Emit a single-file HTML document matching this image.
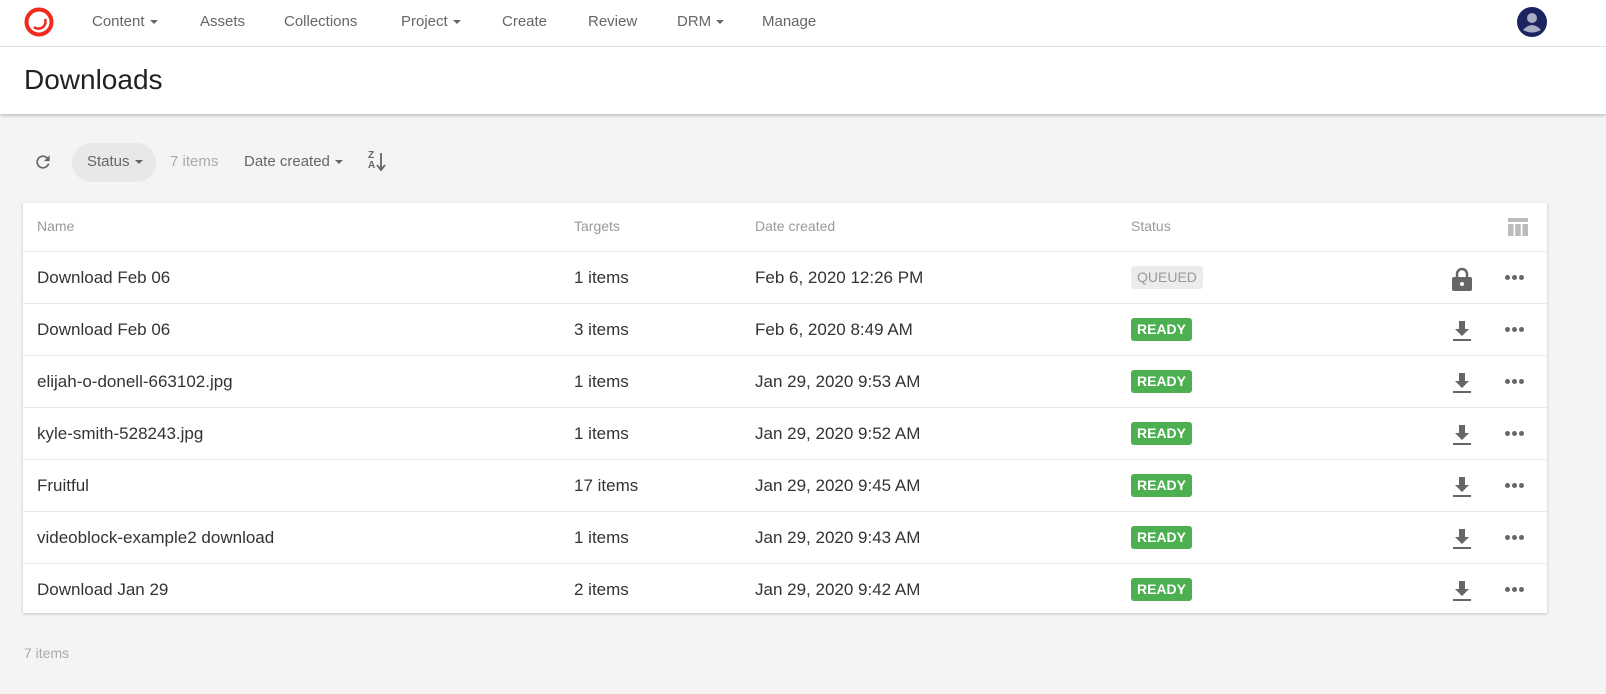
<!DOCTYPE html><html><head><style>
body{margin:0;width:1606px;height:694px;background:#f4f4f4;font-family:"Liberation Sans",sans-serif;overflow:hidden;position:relative}
.nav{position:absolute;top:0;left:0;width:1606px;height:46px;background:#fff;border-bottom:1px solid #e0e0e0}
.nav span{position:absolute;top:13px;font-size:15px;color:#666}
.car{display:inline-block;border-left:4px solid transparent;border-right:4px solid transparent;border-top:4px solid #666;vertical-align:middle;margin-left:5px}
.hdr{position:absolute;top:47px;left:0;width:1606px;height:67px;background:#fff;box-shadow:0 2px 3px rgba(0,0,0,.2)}
.hdr h1{margin:0;position:absolute;left:24px;top:17px;font-size:28px;font-weight:normal;color:#222}
.tb{position:absolute;top:153px;font-size:15px;color:#666}
.card{position:absolute;left:23px;top:203px;width:1524px;height:410px;background:#fff;box-shadow:0 1px 3px rgba(0,0,0,.2)}
.row{position:absolute;left:0;width:1524px;height:52px;border-top:1px solid #e8e8e8}
.row span{position:absolute;top:16px;font-size:17px;color:#333}
.th span{position:absolute;top:15px;font-size:14px;color:#999}
.badge{position:absolute;left:1108px;top:14px;height:23px;line-height:23px;padding:0 6px;border-radius:3px;font-size:14px;font-weight:bold;color:#fff;background:#4caf50}
.q{background:#ececec;color:#999;font-weight:normal}
.dots{position:absolute;left:1482px;top:23px;display:flex;gap:2px}
.dots i{display:block;width:5px;height:5px;border-radius:3px;background:#666}
.ic{position:absolute;left:1429px;top:15px}
</style></head><body>
<div class="nav">
<svg style="position:absolute;left:24px;top:7px" width="30" height="30" viewBox="0 0 30 30"><circle cx="15" cy="15" r="12.5" fill="none" stroke="#f02a1e" stroke-width="4"/><path d="M10 20 A7 7 0 0 0 21 12" fill="none" stroke="#f02a1e" stroke-width="2.5"/></svg>
<span style="left:92px">Content<i class="car"></i></span>
<span style="left:200px">Assets</span>
<span style="left:284px">Collections</span>
<span style="left:401px">Project<i class="car"></i></span>
<span style="left:502px">Create</span>
<span style="left:588px">Review</span>
<span style="left:677px">DRM<i class="car"></i></span>
<span style="left:762px">Manage</span>
<svg style="position:absolute;left:1516px;top:6px" width="32" height="32" viewBox="0 0 32 32"><circle cx="16" cy="16" r="15" fill="#1b2461"/><circle cx="16" cy="12" r="5" fill="#a9adc4"/><path d="M7 24 Q16 14 25 24 Q16 29 7 24Z" fill="#a9adc4"/></svg>
</div>
<div class="hdr"><h1>Downloads</h1></div>
<svg style="position:absolute;left:33px;top:152px" width="20" height="20" viewBox="0 0 24 24"><path d="M17.65 6.35A7.96 7.96 0 0 0 12 4a8 8 0 1 0 7.73 10h-2.08A6 6 0 1 1 12 6c1.66 0 3.14.69 4.22 1.78L13 11h7V4z" fill="#666"/></svg>
<div style="position:absolute;left:72px;top:143px;width:84px;height:39px;border-radius:20px;background:#e8e8e8"></div>
<span class="tb" style="left:87px">Status<i class="car"></i></span>
<span class="tb" style="left:170px;color:#aaa">7 items</span>
<span class="tb" style="left:244px">Date created<i class="car"></i></span>
<span class="tb" style="left:368px;top:151px;font-size:10px;font-weight:bold;line-height:10px">Z<br>A</span>
<svg style="position:absolute;left:376px;top:152px" width="10" height="20" viewBox="0 0 10 20"><path d="M5 1V17M1 13L5 18L9 13" fill="none" stroke="#666" stroke-width="1.8"/></svg>
<div class="card">
<div class="th"><span style="left:14px">Name</span><span style="left:551px">Targets</span><span style="left:732px">Date created</span><span style="left:1108px">Status</span>
<svg style="position:absolute;left:1485px;top:15px" width="20" height="18" viewBox="0 0 20 18"><rect x="0" y="0" width="20" height="4" fill="#bbb"/><rect x="0" y="6" width="5.5" height="12" fill="#bbb"/><rect x="7.2" y="6" width="5.5" height="12" fill="#bbb"/><rect x="14.5" y="6" width="5.5" height="12" fill="#bbb"/></svg></div>
<div class="row" style="top:48px"><span style="left:14px">Download Feb 06</span><span style="left:551px">1 items</span><span style="left:732px">Feb 6, 2020 12:26 PM</span><div class="badge q">QUEUED</div><svg class="ic" width="20" height="24" viewBox="0 0 20 24"><path d="M5 11V7a5 5 0 0 1 10 0v4" fill="none" stroke="#666" stroke-width="2.5"/><rect x="0" y="10" width="20" height="14" rx="2" fill="#666"/><circle cx="10" cy="17" r="2" fill="#fff"/></svg><div class="dots"><i></i><i></i><i></i></div></div>
<div class="row" style="top:100px"><span style="left:14px">Download Feb 06</span><span style="left:551px">3 items</span><span style="left:732px">Feb 6, 2020 8:49 AM</span><div class="badge">READY</div><svg class="ic" width="20" height="24" viewBox="0 0 20 24"><path d="M7 2h6v8h4l-7 7-7-7h4z" fill="#666"/><rect x="1" y="20" width="18" height="2" fill="#666"/></svg><div class="dots"><i></i><i></i><i></i></div></div>
<div class="row" style="top:152px"><span style="left:14px">elijah-o-donell-663102.jpg</span><span style="left:551px">1 items</span><span style="left:732px">Jan 29, 2020 9:53 AM</span><div class="badge">READY</div><svg class="ic" width="20" height="24" viewBox="0 0 20 24"><path d="M7 2h6v8h4l-7 7-7-7h4z" fill="#666"/><rect x="1" y="20" width="18" height="2" fill="#666"/></svg><div class="dots"><i></i><i></i><i></i></div></div>
<div class="row" style="top:204px"><span style="left:14px">kyle-smith-528243.jpg</span><span style="left:551px">1 items</span><span style="left:732px">Jan 29, 2020 9:52 AM</span><div class="badge">READY</div><svg class="ic" width="20" height="24" viewBox="0 0 20 24"><path d="M7 2h6v8h4l-7 7-7-7h4z" fill="#666"/><rect x="1" y="20" width="18" height="2" fill="#666"/></svg><div class="dots"><i></i><i></i><i></i></div></div>
<div class="row" style="top:256px"><span style="left:14px">Fruitful</span><span style="left:551px">17 items</span><span style="left:732px">Jan 29, 2020 9:45 AM</span><div class="badge">READY</div><svg class="ic" width="20" height="24" viewBox="0 0 20 24"><path d="M7 2h6v8h4l-7 7-7-7h4z" fill="#666"/><rect x="1" y="20" width="18" height="2" fill="#666"/></svg><div class="dots"><i></i><i></i><i></i></div></div>
<div class="row" style="top:308px"><span style="left:14px">videoblock-example2 download</span><span style="left:551px">1 items</span><span style="left:732px">Jan 29, 2020 9:43 AM</span><div class="badge">READY</div><svg class="ic" width="20" height="24" viewBox="0 0 20 24"><path d="M7 2h6v8h4l-7 7-7-7h4z" fill="#666"/><rect x="1" y="20" width="18" height="2" fill="#666"/></svg><div class="dots"><i></i><i></i><i></i></div></div>
<div class="row" style="top:360px"><span style="left:14px">Download Jan 29</span><span style="left:551px">2 items</span><span style="left:732px">Jan 29, 2020 9:42 AM</span><div class="badge">READY</div><svg class="ic" width="20" height="24" viewBox="0 0 20 24"><path d="M7 2h6v8h4l-7 7-7-7h4z" fill="#666"/><rect x="1" y="20" width="18" height="2" fill="#666"/></svg><div class="dots"><i></i><i></i><i></i></div></div>
</div>
<span style="position:absolute;left:24px;top:645px;font-size:14px;color:#aaa">7 items</span>
</body></html>
